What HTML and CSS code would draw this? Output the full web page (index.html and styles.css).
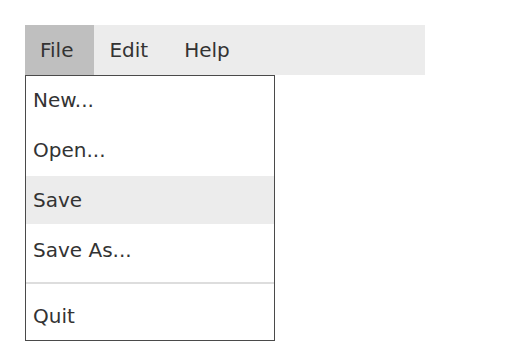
FILE: index.html
```html
<!DOCTYPE html>
<html>
<head>
<meta charset="utf-8">
<link rel="stylesheet" href="styles.css">
</head>
<body>
<div class="app">
  <nav class="menubar">
    <div class="menu-title active">File</div>
    <div class="menu-title">Edit</div>
    <div class="menu-title">Help</div>
  </nav>
  <ul class="dropdown">
    <li class="item">New...</li>
    <li class="item">Open...</li>
    <li class="item hover">Save</li>
    <li class="item">Save As...</li>
    <li class="separator"></li>
    <li class="item">Quit</li>
  </ul>
</div>
</body>
</html>
```
FILE: styles.css
```css
html, body {
  margin: 0;
  padding: 0;
  background: #ffffff;
}
body {
  font-family: "DejaVu Sans", sans-serif;
  font-size: 20px;
  color: #333333;
}
.app {
  padding: 25px;
}
.menubar {
  display: flex;
  width: 400px;
  height: 50px;
  background: #ececec;
}
.menu-title {
  display: flex;
  align-items: center;
  padding: 0 21px 0 15px;
}
.menu-title.active {
  background: #bfbfbf;
}
.dropdown {
  list-style: none;
  margin: 0;
  padding: 0;
  width: 248px;
  border: 1px solid #4a4a4a;
  background: #ffffff;
}
.item {
  display: flex;
  align-items: center;
  height: 48px;
  margin-bottom: 2px;
  padding: 0 7px;
}
.item:last-child {
  margin-bottom: 0;
}
.item.hover {
  background: #ececec;
}
.separator {
  height: 2px;
  background: #dddddd;
  margin: 8px 0;
}
```
